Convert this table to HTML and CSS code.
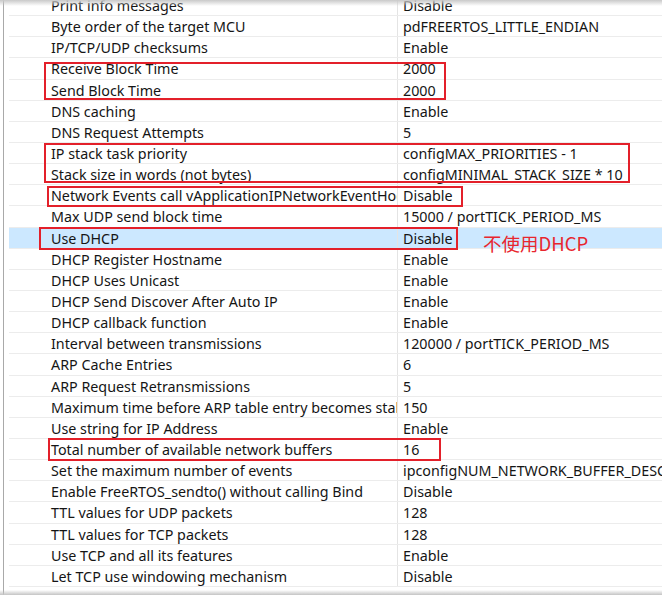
FILE: index.html
```html
<!DOCTYPE html>
<html>
<head>
<meta charset="utf-8">
<link rel="stylesheet" href="styles.css">
</head>
<body>
<div class="frame">
  <div class="grid">
    <div class="row"><div class="name">Print info messages</div><div class="val">Disable</div></div>
    <div class="row"><div class="name">Byte order of the target MCU</div><div class="val">pdFREERTOS_LITTLE_ENDIAN</div></div>
    <div class="row"><div class="name">IP/TCP/UDP checksums</div><div class="val">Enable</div></div>
    <div class="row"><div class="name">Receive Block Time</div><div class="val">2000</div></div>
    <div class="row"><div class="name">Send Block Time</div><div class="val">2000</div></div>
    <div class="row"><div class="name">DNS caching</div><div class="val">Enable</div></div>
    <div class="row"><div class="name">DNS Request Attempts</div><div class="val">5</div></div>
    <div class="row"><div class="name">IP stack task priority</div><div class="val">configMAX_PRIORITIES - 1</div></div>
    <div class="row"><div class="name">Stack size in words (not bytes)</div><div class="val">configMINIMAL_STACK_SIZE * 10</div></div>
    <div class="row"><div class="name">Network Events call vApplicationIPNetworkEventHook</div><div class="val">Disable</div></div>
    <div class="row"><div class="name">Max UDP send block time</div><div class="val">15000 / portTICK_PERIOD_MS</div></div>
    <div class="row selected"><div class="name">Use DHCP</div><div class="val">Disable</div></div>
    <div class="row"><div class="name">DHCP Register Hostname</div><div class="val">Enable</div></div>
    <div class="row"><div class="name">DHCP Uses Unicast</div><div class="val">Enable</div></div>
    <div class="row"><div class="name">DHCP Send Discover After Auto IP</div><div class="val">Enable</div></div>
    <div class="row"><div class="name">DHCP callback function</div><div class="val">Enable</div></div>
    <div class="row"><div class="name">Interval between transmissions</div><div class="val">120000 / portTICK_PERIOD_MS</div></div>
    <div class="row"><div class="name">ARP Cache Entries</div><div class="val">6</div></div>
    <div class="row"><div class="name">ARP Request Retransmissions</div><div class="val">5</div></div>
    <div class="row"><div class="name">Maximum time before ARP table entry becomes stale</div><div class="val">150</div></div>
    <div class="row"><div class="name">Use string for IP Address</div><div class="val">Enable</div></div>
    <div class="row"><div class="name">Total number of available network buffers</div><div class="val">16</div></div>
    <div class="row"><div class="name">Set the maximum number of events</div><div class="val">ipconfigNUM_NETWORK_BUFFER_DESCRIPTORS + 5</div></div>
    <div class="row"><div class="name">Enable FreeRTOS_sendto() without calling Bind</div><div class="val">Disable</div></div>
    <div class="row"><div class="name">TTL values for UDP packets</div><div class="val">128</div></div>
    <div class="row"><div class="name">TTL values for TCP packets</div><div class="val">128</div></div>
    <div class="row"><div class="name">Use TCP and all its features</div><div class="val">Enable</div></div>
    <div class="row"><div class="name">Let TCP use windowing mechanism</div><div class="val">Disable</div></div>
  </div>
  <div class="shade-top"></div>
  <div class="shade-bottom"></div>
  <div class="mark mark-block"></div>
  <div class="mark mark-task"></div>
  <div class="mark mark-events"></div>
  <div class="mark mark-dhcp"></div>
  <div class="mark mark-buffers"></div>
  <div class="note">不使用DHCP</div>
</div>
</body>
</html>
```
FILE: styles.css
```css
html, body {
  margin: 0;
  padding: 0;
  background: #ffffff;
}
body {
  width: 662px;
  height: 595px;
  overflow: hidden;
  font-family: "Noto Sans", "Noto Sans CJK SC", sans-serif;
  font-size: 14.3px;
  color: #151515;
}
.frame {
  position: relative;
  width: 662px;
  height: 595px;
  overflow: hidden;
}
.grid {
  margin-left: 3px;
  border-left: 1px solid #a9a9a9;
  padding-left: 5px;
  height: 600px;
  box-sizing: border-box;
  display: flex;
  flex-direction: column;
  margin-top: -5px;
}
.row {
  display: grid;
  grid-template-columns: 388px 1fr;
  height: 21.15px;
  flex: 0 0 21.15px;
  box-sizing: border-box;
  border-bottom: 1px solid #ececec;
  line-height: 21px;
}
.row.selected {
  background: #cce8ff;
}
.name {
  padding-left: 42px;
  white-space: nowrap;
  overflow: hidden;
}
.val {
  border-left: 1px solid #e4e4e4;
  padding-left: 5px;
  white-space: nowrap;
  overflow: hidden;
}
.shade-top {
  position: absolute;
  left: 0;
  top: 0;
  width: 662px;
  height: 6px;
  background: linear-gradient(#c9c9c9, rgba(255,255,255,0));
}
.shade-bottom {
  position: absolute;
  left: 0;
  bottom: 0;
  width: 662px;
  height: 5px;
  background: linear-gradient(rgba(255,255,255,0), #c4c4c4);
}
.mark {
  position: absolute;
  border: 2px solid #e3202a;
  box-sizing: border-box;
}
.mark-block { left: 44px; top: 62px; width: 402px; height: 38px; }
.mark-task { left: 44px; top: 143px; width: 586px; height: 40px; }
.mark-events { left: 47px; top: 186px; width: 416px; height: 21px; }
.mark-dhcp { left: 39px; top: 227px; width: 419px; height: 23px; }
.mark-buffers { left: 48px; top: 438px; width: 393px; height: 23px; }
.note {
  position: absolute;
  left: 483px;
  top: 231px;
  font-family: "Noto Sans CJK SC", "Noto Sans", sans-serif;
  font-size: 18.5px;
  line-height: 24px;
  color: #e8262e;
}
```
